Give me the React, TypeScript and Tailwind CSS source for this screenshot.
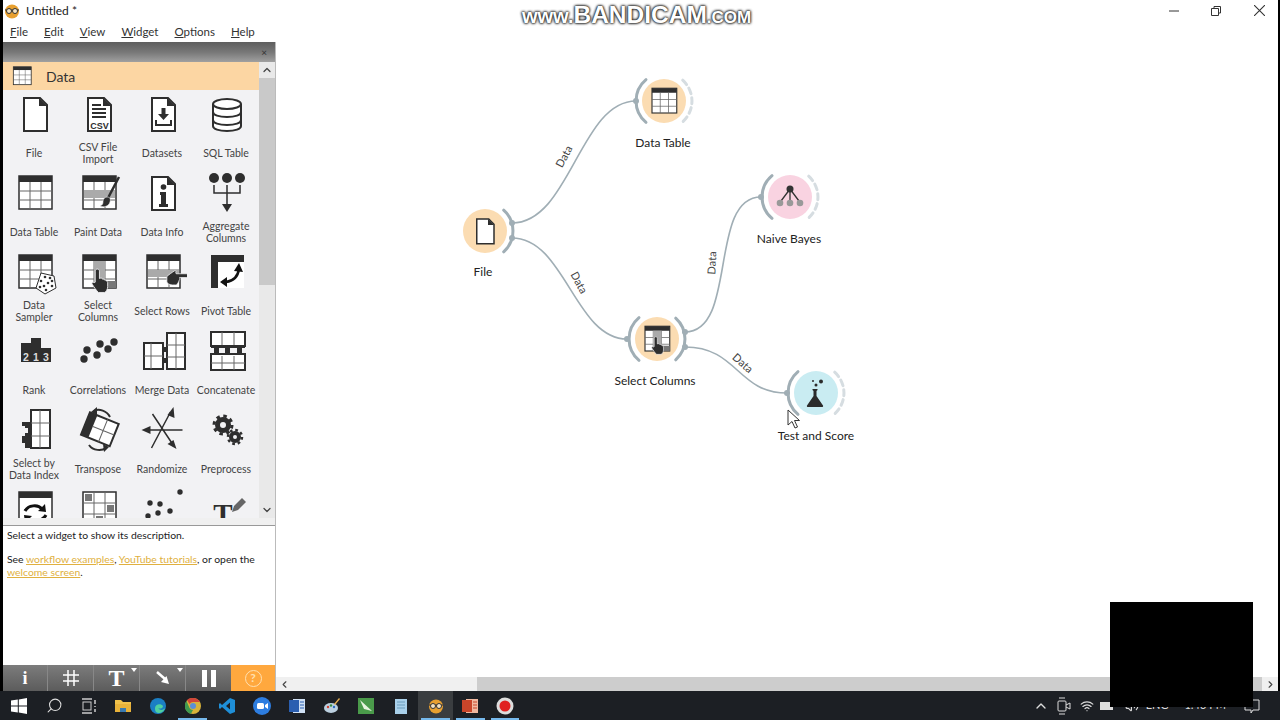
import type { ReactNode } from "react";
import { ChevronDown, ChevronLeft, ChevronRight, ChevronUp, Search, Wifi, Volume2 } from "lucide-react";

const INK = "#2e2e2e";

function Box({ children, className = "w-[48px] h-[48px]" }: { children: ReactNode; className?: string }) {
  return (
    <svg viewBox="0 0 48 48" className={className}>
      {children}
    </svg>
  );
}

// plain grid with dark header, used by most table widgets
function Table({ x = 8, y = 7, w = 33, h = 33, head = 6, cols = 3, rows = 3 }) {
  const lines = [];
  for (let i = 1; i < cols; i++) lines.push(<path key={"c" + i} d={`M${x + (w * i) / cols} ${y + head}V${y + h}`} stroke="#666" strokeWidth="1" />);
  for (let i = 1; i < rows; i++) lines.push(<path key={"r" + i} d={`M${x} ${y + head + ((h - head) * i) / rows}H${x + w}`} stroke="#666" strokeWidth="1" />);
  return (
    <g>
      <rect x={x} y={y} width={w} height={h} fill="#fff" stroke={INK} strokeWidth="1.5" />
      <rect x={x} y={y} width={w} height={head} fill={INK} />
      {lines}
    </g>
  );
}

function HandPath({ transform }: { transform: string }) {
  return (
    <path
      transform={transform}
      fill={INK}
      stroke="#f2f2f4"
      strokeWidth="0.8"
      d="M7 1c1.2 0 2 .9 2 2v7l1-.3c.9-.3 1.5.2 1.8.9.8-.3 1.6 0 1.9.8.8-.2 1.6.2 1.8 1 .6 0 1.3.4 1.3 1.4v4c0 2.5-1.5 5-3 5.5H8c-1.3-1-4.8-6-6-8-.7-1.2.7-2.4 1.9-1.3L5 13.5V3c0-1.1.9-2 2-2z"
    />
  );
}

function Doc({ children }: { children?: ReactNode }) {
  return (
    <g>
      <path d="M13 8H29L36 15V41H13Z" fill="#fff" stroke={INK} strokeWidth="2" />
      <path d="M28 8L36 16H28Z" fill={INK} />
      {children}
    </g>
  );
}

const FileIcon = ({ className }: { className?: string }) => <Box className={className}><Doc /></Box>;

const CsvIcon = () => (
  <Box>
    <Doc>
      <path d="M17 14h9v2h-9zM17 18h14v2H17zM17 22h14v2H17zM17 26h14v2H17z" fill={INK} />
      <text x="24.5" y="38.5" textAnchor="middle" fontFamily="Liberation Sans, sans-serif" fontWeight="700" fontSize="9" fill={INK}>CSV</text>
    </Doc>
  </Box>
);

const DatasetsIcon = () => (
  <Box>
    <Doc>
      <path d="M22.5 18h4v6h3.5l-5.500 6-5.500-6h3.500z" fill={INK} />
      <path d="M17 30v5h15v-5" fill="none" stroke={INK} strokeWidth="2" />
    </Doc>
  </Box>
);

const SqlIcon = () => (
  <Box>
    <g fill="#fff" stroke={INK} strokeWidth="2">
      <path d="M10 14V36C10 39 16 41 24 41S38 39 38 36V14" />
      <ellipse cx="24" cy="14" rx="14" ry="5" />
      <path d="M10 22C10 25 16 27 24 27S38 25 38 22M10 30C10 33 16 35 24 35S38 33 38 30" fill="none" />
    </g>
  </Box>
);

const DataTableIcon = ({ className }: { className?: string }) => <Box className={className}><Table /></Box>;

const PaintIcon = () => (
  <Box>
    <Table />
    <rect x="9" y="21" width="31" height="8" fill="#aaa" />
    <path d="M44 8L33 29" stroke={INK} strokeWidth="2.500" />
    <path d="M32 28c3 0 4 2 3 5-1 4-6 6-10 4 3-1 3-3 3-5 0-2 2-4 4-4z" fill={INK} stroke="#f2f2f4" strokeWidth="0.6" />
  </Box>
);

const InfoIcon = () => (
  <Box>
    <Doc>
      <circle cx="24.500" cy="18" r="2.800" fill={INK} />
      <path d="M21 23h6v12h2v3h-9v-3h2v-9h-1z" fill={INK} />
    </Doc>
  </Box>
);

const AggregateIcon = () => (
  <Box>
    <circle cx="11" cy="9" r="5" fill={INK} />
    <circle cx="24" cy="9" r="5" fill={INK} />
    <circle cx="37" cy="9" r="5" fill={INK} />
    <path d="M11 16V24H37V16M24 16V38" fill="none" stroke={INK} strokeWidth="1.500" />
    <path d="M19 35h10l-5 8z" fill={INK} />
  </Box>
);

const SamplerIcon = () => (
  <Box>
    <Table />
    <path d="M30 25l13 3 2 12-11 6-9-6z" fill="#fff" stroke={INK} strokeWidth="1" />
    <g fill={INK}>
      <circle cx="30" cy="33" r="1.300" /><circle cx="34" cy="29" r="1.300" /><circle cx="39" cy="30" r="1.300" />
      <circle cx="33" cy="38" r="1.300" /><circle cx="37" cy="35" r="1.300" /><circle cx="41" cy="38" r="1.300" />
      <circle cx="35" cy="42" r="1.300" /><circle cx="29" cy="39" r="1.300" /><circle cx="41" cy="33" r="1.300" />
    </g>
  </Box>
);

const ColumnsIcon = ({ className }: { className?: string }) => (
  <Box className={className}>
    <Table />
    <rect x="19" y="13" width="11" height="27" fill="#aaa" />
    <rect x="30" y="33" width="11" height="7" fill="#777" />
    <HandPath transform="translate(15 20) scale(1.050)" />
  </Box>
);

const RowsIcon = () => (
  <Box>
    <Table />
    <rect x="9" y="22" width="31" height="7" fill="#aaa" />
    <HandPath transform="translate(50 21) rotate(90) scale(0.950)" />
  </Box>
);

const PivotIcon = () => (
  <Box>
    <rect x="8" y="7" width="33" height="33" fill={INK} />
    <rect x="15" y="14" width="26" height="26" fill="#fff" />
    <path d="M23 34C31 33 35 28 36 21" fill="none" stroke="#111" strokeWidth="2.500" />
    <path d="M31 23l5-8 4 9zM24 29v10l-7-5z" fill="#111" />
  </Box>
);

const RankIcon = () => (
  <Box>
    <rect x="10" y="16" width="10" height="19" fill={INK} />
    <rect x="20" y="11" width="10" height="24" fill={INK} />
    <rect x="30" y="21" width="10" height="14" fill={INK} />
    <g fill="#ddd" fontFamily="Liberation Sans, sans-serif" fontWeight="700" fontSize="10.500" textAnchor="middle">
      <text x="15" y="33.500">2</text>
      <text x="25" y="33.500">1</text>
      <text x="35" y="33.500">3</text>
    </g>
  </Box>
);

const CorrelationsIcon = () => (
  <Box>
    <g fill={INK}>
      <circle cx="9" cy="32" r="3.700" /><circle cx="12" cy="23" r="3.700" /><circle cx="22" cy="28" r="3.700" />
      <circle cx="25" cy="17" r="3.700" /><circle cx="33" cy="22" r="3.700" /><circle cx="39" cy="15" r="3.700" />
    </g>
  </Box>
);

const MergeIcon = () => (
  <Box>
    <rect x="5" y="16" width="19" height="26" fill="#fff" stroke={INK} strokeWidth="2" />
    <path d="M12 16v26M5 29h19" stroke="#666" />
    <rect x="28" y="6" width="18" height="36" fill="#fff" stroke={INK} strokeWidth="2" />
    <path d="M37 6v36M28 18h18M28 30h18" stroke="#666" />
    <path d="M24 20h4v5h-4zM24 31h4v5h-4z" fill={INK} />
  </Box>
);

const ConcatIcon = () => (
  <Box>
    <rect x="8" y="5" width="34" height="14" fill="#fff" stroke={INK} strokeWidth="2" />
    <rect x="8" y="27" width="34" height="16" fill="#fff" stroke={INK} strokeWidth="2" />
    <path d="M19 5v14M31 5v14M19 29v14M31 29v14M8 36h34" stroke="#666" />
    <path d="M8 18h34v3H8zM11 21h5v6h-5zM22 21h5v6h-5zM34 21h5v6h-5zM8 26h34v2H8z" fill={INK} />
  </Box>
);

const IndexIcon = () => (
  <Box>
    <rect x="20" y="4" width="19" height="38" fill="#fff" stroke={INK} strokeWidth="2" />
    <path d="M29 4v38M20 17h19M20 30h19" stroke="#666" />
    <path d="M14 16h6v26h-6v-5h-3v-7h3v-3h3v-5h-3v-2h-3v-4h3z" fill={INK} />
  </Box>
);

const TransposeIcon = () => (
  <Box>
    <g transform="rotate(22 24 24)">
      <rect x="9" y="11" width="31" height="24" fill="#fff" stroke={INK} strokeWidth="2" />
      <rect x="9" y="11" width="8" height="24" fill={INK} />
      <path d="M28 11v24M17 23h23" stroke="#666" />
    </g>
    <path d="M19 5C24 2 32 5 35 11M14 39C18 45 27 45 31 42" fill="none" stroke={INK} strokeWidth="2" />
    <path d="M22 1v8l-6-3zM28 38l1 8 5-5z" fill={INK} />
  </Box>
);

const RandomizeIcon = () => (
  <Box>
    <g transform="translate(1.500 0)">
      <g stroke={INK} strokeWidth="1.500" fill="none">
        <path d="M11 42L30 6M12 8L32 38M5 24H42" />
      </g>
      <path d="M33 1l1 11-7-3zM36 43l-9-5 6-4zM1 24l9-4v8z" fill={INK} />
    </g>
  </Box>
);

const PreprocessIcon = () => (
  <Box>
    <g fill="none" stroke={INK}>
      <circle cx="20" cy="19" r="5.500" strokeWidth="5" />
      <circle cx="20" cy="19" r="9" strokeWidth="3" strokeDasharray="3.500 3.570" />
      <circle cx="32" cy="31" r="4" strokeWidth="4" />
      <circle cx="32" cy="31" r="7" strokeWidth="2.500" strokeDasharray="2.700 2.800" />
    </g>
  </Box>
);

const RefreshIcon = () => (
  <Box>
    <rect x="8" y="7" width="33" height="40" fill="#fff" stroke={INK} strokeWidth="1.500" />
    <rect x="8" y="7" width="33" height="6" fill={INK} />
    <path d="M14 26C17 20 27 19 31 24M35 30C31 37 21 37 17 33" fill="none" stroke="#111" strokeWidth="3" />
    <path d="M27 26l8 1-1-8zM21 31l-8-1 1 8z" fill="#111" />
  </Box>
);

const GridIcon = () => (
  <Box>
    <rect x="8" y="7" width="33" height="40" fill="#fff" stroke={INK} strokeWidth="1.500" />
    <path d="M19 7v40M30 7v40M8 18h33M8 29h33M8 40h33" stroke="#666" />
    <rect x="10" y="9" width="7" height="7" fill="#777" />
    <rect x="32" y="20" width="7" height="7" fill="#777" />
    <rect x="21" y="31" width="7" height="7" fill="#777" />
  </Box>
);

const ScatterIcon = () => (
  <Box>
    <g fill={INK}>
      <circle cx="41" cy="7" r="2.700" /><circle cx="11" cy="18" r="2.700" /><circle cx="21" cy="19" r="2.700" />
      <circle cx="31" cy="26" r="2.700" /><circle cx="19" cy="28" r="2.700" /><circle cx="9" cy="31" r="2.700" />
    </g>
  </Box>
);

const TextIcon = () => (
  <Box>
    <text x="20" y="39" textAnchor="middle" fontFamily="Liberation Serif, serif" fontWeight="700" fontSize="29" fill={INK}>T</text>
    <path d="M29 27l2-6 8-8 4 4-8 8z" fill="#666" />
  </Box>
);

const BayesIcon = () => (
  <svg viewBox="0 0 30 30" className="w-[30px] h-[30px]">
    <path d="M15 7L6 19M15 7V18M15 7L24 19" stroke="#333" strokeWidth="1.300" fill="none" />
    <circle cx="15" cy="7" r="3.500" fill="#333" />
    <circle cx="5" cy="21" r="3.300" fill="#999" />
    <circle cx="15" cy="21" r="3.300" fill="#999" />
    <circle cx="25" cy="21" r="3.300" fill="#999" />
  </svg>
);

const FlaskIcon = () => (
  <svg viewBox="0 0 30 30" className="w-[30px] h-[30px]">
    <path d="M11.500 11h5v1l-1 1v5l6.500 9.500c.4.800 0 1.500-1 1.500H7c-1 0-1.400-.7-1-1.500L12.500 18v-5l-1-1z" fill="#2b2b2b" />
    <circle cx="15" cy="7" r="1.500" fill="#2b2b2b" />
    <circle cx="20" cy="3.500" r="2" fill="#2b2b2b" />
    <circle cx="12" cy="3" r="1" fill="#2b2b2b" />
  </svg>
);

// last row is cut off by the panel so it has no visible labels
const widgets: { id: string; label: string[]; icon: ReactNode }[] = [
  { id: "file", label: ["File"], icon: <FileIcon /> },
  { id: "csv", label: ["CSV File", "Import"], icon: <CsvIcon /> },
  { id: "datasets", label: ["Datasets"], icon: <DatasetsIcon /> },
  { id: "sql", label: ["SQL Table"], icon: <SqlIcon /> },
  { id: "table", label: ["Data Table"], icon: <DataTableIcon /> },
  { id: "paint", label: ["Paint Data"], icon: <PaintIcon /> },
  { id: "info", label: ["Data Info"], icon: <InfoIcon /> },
  { id: "aggregate", label: ["Aggregate", "Columns"], icon: <AggregateIcon /> },
  { id: "sampler", label: ["Data", "Sampler"], icon: <SamplerIcon /> },
  { id: "columns", label: ["Select", "Columns"], icon: <ColumnsIcon /> },
  { id: "rows", label: ["Select Rows"], icon: <RowsIcon /> },
  { id: "pivot", label: ["Pivot Table"], icon: <PivotIcon /> },
  { id: "rank", label: ["Rank"], icon: <RankIcon /> },
  { id: "corr", label: ["Correlations"], icon: <CorrelationsIcon /> },
  { id: "merge", label: ["Merge Data"], icon: <MergeIcon /> },
  { id: "concat", label: ["Concatenate"], icon: <ConcatIcon /> },
  { id: "index", label: ["Select by", "Data Index"], icon: <IndexIcon /> },
  { id: "transpose", label: ["Transpose"], icon: <TransposeIcon /> },
  { id: "randomize", label: ["Randomize"], icon: <RandomizeIcon /> },
  { id: "preprocess", label: ["Preprocess"], icon: <PreprocessIcon /> },
  { id: "r6a", label: [], icon: <RefreshIcon /> },
  { id: "r6b", label: [], icon: <GridIcon /> },
  { id: "r6c", label: [], icon: <ScatterIcon /> },
  { id: "r6d", label: [], icon: <TextIcon /> },
];

function arc(cx: number, cy: number, r: number, from: number, to: number) {
  const p = (a: number) => {
    const t = (a * Math.PI) / 180;
    return `${(cx + r * Math.cos(t)).toFixed(1)} ${(cy + r * Math.sin(t)).toFixed(1)}`;
  };
  return `M${p(from)}A${r} ${r} 0 0 1 ${p(to)}`;
}

const WIRE = "#a0aeb5";
const OFF = "#d6dde1";

function Ports({ x, y, input, output, dashed }: { x: number; y: number; input?: boolean; output?: boolean; dashed?: boolean }) {
  return (
    <g fill="none" strokeLinecap="round">
      {input && <path d={arc(x, y, 28, 130, 230)} stroke={WIRE} strokeWidth="3" />}
      {output && <path d={arc(x, y, 28, -48, 48)} stroke={WIRE} strokeWidth="3" />}
      {dashed && <path d={arc(x, y, 28, -48, 48)} stroke={OFF} strokeWidth="3" strokeDasharray="6 4" />}
    </g>
  );
}

function WireLabel({ x, y, angle }: { x: number; y: number; angle: number }) {
  return (
    <text x={x} y={y} transform={`rotate(${angle} ${x} ${y})`} textAnchor="middle" dominantBaseline="middle" fontFamily="Lato, sans-serif" fontSize="11" fill="#444">
      Data
    </text>
  );
}

function Canvas() {
  return (
    <div className="relative flex-1 bg-white">
      <svg viewBox="276 42 1002 635" className="absolute inset-0 w-full h-full">
        <g fill="none" stroke={WIRE} strokeWidth="1.600">
          <path d="M512 223C570 223 580 101 636 101" />
          <path d="M512 238C565 238 575 339 627 339" />
          <path d="M685 332C738 332 708 197 761 197" />
          <path d="M685 347C738 347 737 393 787 393" />
        </g>
        <g fill={WIRE}>
          <circle cx="512" cy="223" r="3" /><circle cx="512" cy="238" r="3" /><circle cx="636" cy="101" r="3" />
          <circle cx="627" cy="339" r="3" /><circle cx="685" cy="332" r="3" /><circle cx="685" cy="347" r="3" />
          <circle cx="761" cy="197" r="3" /><circle cx="787" cy="393" r="3" />
        </g>
        <Ports x={485} y={231} output />
        <Ports x={664} y={101} input dashed />
        <Ports x={657} y={339} input output />
        <Ports x={790} y={197} input dashed />
        <Ports x={816} y={393} input dashed />
        <WireLabel x={565} y={157} angle={-62} />
        <WireLabel x={578} y={283} angle={62} />
        <WireLabel x={713} y={263} angle={-87} />
        <WireLabel x={742} y={364} angle={42} />
      </svg>

      <div className="absolute left-[187px] top-[167px] w-[44px] h-[44px] rounded-full bg-[#fbdcb2] flex items-center justify-center">
        <FileIcon className="w-[36px] h-[36px]" />
      </div>
      <div className="absolute left-[366px] top-[37px] w-[44px] h-[44px] rounded-full bg-[#fbdcb2] flex items-center justify-center">
        <DataTableIcon className="w-[36px] h-[36px]" />
      </div>
      <div className="absolute left-[359px] top-[275px] w-[44px] h-[44px] rounded-full bg-[#fbdcb2] flex items-center justify-center">
        <ColumnsIcon className="w-[36px] h-[36px]" />
      </div>
      <div className="absolute left-[492px] top-[133px] w-[44px] h-[44px] rounded-full bg-[#f9d3e1] flex items-center justify-center">
        <BayesIcon />
      </div>
      <div className="absolute left-[518px] top-[329px] w-[44px] h-[44px] rounded-full bg-[#c9ecf2] flex items-center justify-center">
        <FlaskIcon />
      </div>

      <div className="absolute left-[107px] top-[221px] w-[200px] text-center text-[12px] leading-[18px] text-[#222]">File</div>
      <div className="absolute left-[287px] top-[92px] w-[200px] text-center text-[12px] leading-[18px] text-[#222]">Data Table</div>
      <div className="absolute left-[413px] top-[188px] w-[200px] text-center text-[12px] leading-[18px] text-[#222]">Naive Bayes</div>
      <div className="absolute left-[279px] top-[330px] w-[200px] text-center text-[12px] leading-[18px] text-[#222]">Select Columns</div>
      <div className="absolute left-[440px] top-[385px] w-[200px] text-center text-[12px] leading-[18px] text-[#222]">Test and Score</div>

      {/* mouse pointer */}
      <svg viewBox="0 0 14 20" className="absolute left-[511px] top-[367px] w-[14px] h-[20px]">
        <path d="M1 1V16L5 12.500L8 19L10.500 18L7.500 11.500H12.500Z" fill="#fff" stroke="#333" strokeWidth="1" />
      </svg>
    </div>
  );
}

function Sidebar() {
  return (
    <div className="w-[273px] flex flex-col bg-[#f2f2f4] border-r border-[#bbb]">
      <div className="h-[20px] flex items-center justify-end pr-[8px] bg-gradient-to-b from-[#5e5e5e] via-[#777] to-[#a0a0a0] text-[10px] leading-none text-[#333]">×</div>
      <div className="flex flex-1 min-h-0">
        <div className="w-[256px] flex flex-col min-h-0">
          <div className="h-[28px] shrink-0 flex items-center gap-[11px] pl-[6px] bg-[#fcd6a3]">
            <DataTableIcon className="w-[26px] h-[26px]" />
            <span className="text-[14px] text-[#333]">Data</span>
          </div>
          <div className="flex-1 min-h-0 overflow-hidden grid grid-cols-[repeat(4,64px)] auto-rows-[79px]">
            {widgets.map((w) => (
              <div key={w.id} className="flex flex-col items-center">
                {w.icon}
                {w.label.length > 0 && (
                  <div className="h-[28px] mt-px mr-[2px] flex flex-col justify-center items-center text-[10.500px] leading-[12px] text-[#444] whitespace-nowrap">
                    {w.label.map((l) => (
                      <span key={l}>{l}</span>
                    ))}
                  </div>
                )}
              </div>
            ))}
          </div>
        </div>
        <div className="w-[16px] flex flex-col items-center bg-[#e9e9e9] text-[#444]">
          <div className="h-[16px] flex items-center"><ChevronUp size={12} strokeWidth={2.5} /></div>
          <div className="h-[207px] w-full bg-[#c9c9c9]" />
          <div className="flex-1" />
          <div className="h-[16px] flex items-center"><ChevronDown size={12} strokeWidth={2.5} /></div>
        </div>
      </div>
      <div className="h-[7px] shrink-0 bg-[#f0f0f0]" />
      <div className="h-[140px] shrink-0 bg-white border-t border-[#999] px-[4px] pt-[3px] text-[10.400px] leading-[13px] text-[#222]">
        <p>Select a widget to show its description.</p>
        <p className="mt-[11px]">
          See <span className="text-[#e0b040] underline">workflow examples</span>, <span className="text-[#e0b040] underline">YouTube tutorials</span>, or open the{" "}
          <span className="text-[#e0b040] underline">welcome screen</span>.
        </p>
      </div>
      <div className="h-[26px] shrink-0 flex text-white">
        <div className="w-[45px] flex items-center justify-center bg-gradient-to-b from-[#7c7c7c] to-[#5c5c5c] border-r border-[#888] font-['Liberation_Serif',serif] font-bold text-[18px]">i</div>
        <div className="w-[46px] flex items-center justify-center bg-gradient-to-b from-[#7c7c7c] to-[#5c5c5c] border-r border-[#888]">
          <svg viewBox="0 0 18 18" className="w-[18px] h-[18px]">
            <path d="M6 1V17M12 1V17M1 6H17M1 12H17" stroke="#fff" strokeWidth="1.500" />
          </svg>
        </div>
        <div className="relative w-[46px] flex items-center justify-center bg-gradient-to-b from-[#7c7c7c] to-[#5c5c5c] border-r border-[#888] font-['Liberation_Serif',serif] font-bold text-[24px]">
          T
          <span className="absolute right-[2px] top-[3px] w-0 h-0 border-x-[3px] border-x-transparent border-t-[4px] border-t-white" />
        </div>
        <div className="relative w-[46px] flex items-center justify-center bg-gradient-to-b from-[#7c7c7c] to-[#5c5c5c] border-r border-[#888]">
          <svg viewBox="0 0 16 16" className="w-[16px] h-[16px]">
            <path d="M2 2L10 9" stroke="#fff" strokeWidth="2.500" />
            <path d="M14 14L6 12L11.500 6Z" fill="#fff" />
          </svg>
          <span className="absolute right-[2px] top-[3px] w-0 h-0 border-x-[3px] border-x-transparent border-t-[4px] border-t-white" />
        </div>
        <div className="w-[45px] flex items-center justify-center gap-[4px] bg-gradient-to-b from-[#7c7c7c] to-[#5c5c5c]">
          <span className="w-[5px] h-[17px] bg-white" />
          <span className="w-[5px] h-[17px] bg-white" />
        </div>
        <div className="flex-1 flex items-center justify-center bg-[#ffa83e]">
          <span className="w-[17px] h-[17px] rounded-full border-[1.500px] border-[#ffe0b0] flex items-center justify-center text-[12px] font-bold text-[#ffe0b0]">?</span>
        </div>
      </div>
    </div>
  );
}

function OrangeLogo({ className }: { className: string }) {
  return (
    <svg viewBox="0 0 16 16" className={className}>
      <circle cx="8" cy="8.500" r="7" fill="#e8a030" />
      <path d="M1 7H15" stroke="#333" strokeWidth="1" />
      <circle cx="5" cy="8" r="2.500" fill="#f4e4c4" stroke="#333" strokeWidth="1" />
      <circle cx="11" cy="8" r="2.500" fill="#f4e4c4" stroke="#333" strokeWidth="1" />
    </svg>
  );
}

function TaskIcon({ children, active, open }: { children: ReactNode; active?: boolean; open?: boolean }) {
  return (
    <div className={active ? "relative w-[34.700px] h-full flex items-center justify-center bg-[#3a3d40]" : "relative w-[34.700px] h-full flex items-center justify-center"}>
      {children}
      {open && <span className="absolute left-[3px] right-[3px] bottom-0 h-[2px] bg-[#76b9ed]" />}
    </div>
  );
}

function Taskbar() {
  return (
    <div className="h-[29px] shrink-0 flex items-center pl-[2px] bg-[#1c1f24] text-white">
      <TaskIcon>
        <svg viewBox="0 0 16 16" className="w-[16px] h-[16px]"><path d="M0 2.500L6.800 1.500V7.500H0ZM7.800 1.400L16 0V7.500H7.800ZM0 8.500H6.800V14.500L0 13.500ZM7.800 8.500H16V16L7.800 14.600Z" fill="#fff" /></svg>
      </TaskIcon>
      <TaskIcon><Search size={17} strokeWidth={1.5} className="-scale-x-100 text-[#ddd]" /></TaskIcon>
      <TaskIcon>
        <svg viewBox="0 0 16 16" className="w-[16px] h-[16px]" fill="none" stroke="#ccc"><path d="M1 1H11M1 15H11" strokeWidth="1.500" /><rect x="2" y="4" width="8" height="8" /><path d="M14 2V6M14 8V9M14 11V14" strokeWidth="1.500" /></svg>
      </TaskIcon>
      <TaskIcon>
        <svg viewBox="0 0 18 16" className="w-[18px] h-[16px]"><path d="M1 2H7L9 4H17V14H1Z" fill="#f0c14b" /><rect x="1" y="6" width="16" height="8" fill="#e8b23a" /><rect x="6" y="10" width="6" height="4" fill="#3a7ab0" /></svg>
      </TaskIcon>
      <TaskIcon>
        <svg viewBox="0 0 16 16" className="w-[16px] h-[16px]"><circle cx="8" cy="8" r="8" fill="#1b7fc4" /><path d="M5 10C5 6 11 5 13 8C13 11 9 11 8 10C10 13 14 12 15 10C14 15 8 16 6 14C5 13 5 11 5 10Z" fill="#4fd1a0" /></svg>
      </TaskIcon>
      <TaskIcon open>
        <svg viewBox="0 0 16 16" className="w-[16px] h-[16px]"><circle cx="8" cy="8" r="8" fill="#d8b23a" /><path d="M8 0A8 8 0 0 1 15 4H8A4 4 0 0 0 4.500 6L2 2A8 8 0 0 1 8 0Z" fill="#d0453a" /><path d="M1.500 3A8 8 0 0 0 6 15.800L8 12A4 4 0 0 1 4.500 10Z" fill="#3f9a50" /><circle cx="8" cy="8" r="3" fill="#5a8fd8" /></svg>
      </TaskIcon>
      <TaskIcon>
        <svg viewBox="0 0 16 16" className="w-[16px] h-[16px]"><path d="M11 0L16 2V14L11 16L3 9L1 11L0 10V6L1 5L3 7ZM11 4.500L7 8L11 11.500Z" fill="#1f8fd8" /></svg>
      </TaskIcon>
      <TaskIcon>
        <svg viewBox="0 0 18 18" className="w-[18px] h-[18px]"><circle cx="9" cy="9" r="9" fill="#2d7de0" /><rect x="4" y="6" width="7" height="6" rx="1.500" fill="#fff" /><path d="M12 8L15 6V12L12 10Z" fill="#fff" /></svg>
      </TaskIcon>
      <TaskIcon>
        <svg viewBox="0 0 16 16" className="w-[16px] h-[16px]"><rect x="4" y="1" width="12" height="14" fill="#cfe0f5" /><rect x="0" y="2" width="10" height="12" fill="#2b5fb0" /><path d="M11 4h4M11 7h4M11 10h4" stroke="#2b5fb0" /></svg>
      </TaskIcon>
      <TaskIcon>
        <svg viewBox="0 0 16 16" className="w-[16px] h-[16px]"><ellipse cx="7" cy="10" rx="7" ry="5" fill="#bcd0e0" /><circle cx="4" cy="9" r="1.200" fill="#d04030" /><circle cx="7" cy="7.500" r="1.200" fill="#3a8a40" /><circle cx="10" cy="9" r="1.200" fill="#2a6ac0" /><path d="M10 6L15 0L16 1L11 7Z" fill="#e8b050" /></svg>
      </TaskIcon>
      <TaskIcon>
        <svg viewBox="0 0 16 16" className="w-[16px] h-[16px]"><rect width="16" height="16" fill="#4a9a4a" /><path d="M2 2L14 13L6 11Z" fill="#e8f4e0" /></svg>
      </TaskIcon>
      <TaskIcon>
        <svg viewBox="0 0 16 16" className="w-[16px] h-[16px]"><rect x="2" y="1" width="12" height="15" fill="#a9d0ea" /><path d="M4 4h8M4 7h8M4 10h8" stroke="#6a9cbc" /></svg>
      </TaskIcon>
      <TaskIcon active open><OrangeLogo className="w-[16px] h-[16px]" /></TaskIcon>
      <TaskIcon open>
        <svg viewBox="0 0 16 16" className="w-[16px] h-[16px]"><rect x="4" y="1" width="12" height="14" fill="#f0b8a0" /><rect x="0" y="2" width="10" height="12" fill="#c8452a" /><path d="M11 4h4M11 7h4M11 10h4" stroke="#c8452a" /></svg>
      </TaskIcon>
      <TaskIcon open>
        <svg viewBox="0 0 18 18" className="w-[18px] h-[18px]"><circle cx="9" cy="9" r="8.500" fill="#ddd" /><circle cx="9" cy="9" r="5.500" fill="#e02020" /></svg>
      </TaskIcon>
      <div className="flex-1" />
      <div className="flex items-center h-full pr-[20px]">
        <ChevronUp size={16} className="text-[#ddd] mr-[8px]" />
        <svg viewBox="0 0 14 18" className="w-[14px] h-[18px] mr-[9px]" fill="none" stroke="#ddd"><rect x="1" y="4" width="8" height="10" rx="1" /><path d="M9 8l4-2v6l-4-2M2 1h6M2 17h6" /></svg>
        <Wifi size={14} className="text-[#ddd] mr-[5px]" />
        <svg viewBox="0 0 16 12" className="w-[16px] h-[12px] mr-[10px]"><rect x="1" y="2" width="13" height="8" fill="#ddd" /></svg>
        <Volume2 size={14} className="text-[#ddd] mr-[7px]" />
        <span className="text-[11px] text-[#ddd] mr-[16px]">ENG</span>
        <span className="text-[11px] text-[#ddd] mr-[18px]">1:43 PM</span>
        <svg viewBox="0 0 16 16" className="w-[16px] h-[16px]" fill="none" stroke="#ddd"><path d="M1 2H15V12H9L7 15V12H1Z" /></svg>
      </div>
    </div>
  );
}

export default function App() {
  return (
    <div className="relative w-[1280px] h-[720px] overflow-hidden flex flex-col bg-black font-['Lato','Liberation_Sans',sans-serif]">
      <div className="flex-1 min-h-0 flex flex-col ml-[3px] mr-[2px] bg-white">
        <div className="h-[21px] shrink-0 flex items-center">
          <OrangeLogo className="w-[16px] h-[16px] ml-[1px]" />
          <span className="ml-[6px] text-[12px] text-[#222]">Untitled *</span>
          <div className="ml-auto flex items-center text-[#333]">
            <svg viewBox="0 0 10 10" className="w-[10px] h-[10px] mr-[32px]"><path d="M0 5H10" stroke="#333" /></svg>
            <svg viewBox="0 0 10 10" className="w-[10px] h-[10px] mr-[33px]" fill="none" stroke="#333"><path d="M3 2V0.500H9.500V7H8M0.500 2.500H7.500V9.500H0.500Z" /></svg>
            <svg viewBox="0 0 10 10" className="w-[11px] h-[11px] mr-[13px]"><path d="M0 0L10 10M10 0L0 10" stroke="#333" /></svg>
          </div>
        </div>
        <div className="h-[21px] shrink-0 flex items-center pl-[7px] gap-[16px] text-[11.500px] text-[#333]">
          <span><u>F</u>ile</span>
          <span><u>E</u>dit</span>
          <span><u>V</u>iew</span>
          <span><u>W</u>idget</span>
          <span><u>O</u>ptions</span>
          <span><u>H</u>elp</span>
        </div>
        <div className="flex-1 min-h-0 flex">
          <Sidebar />
          <div className="flex-1 flex flex-col min-w-0">
            <Canvas />
            <div className="h-[14px] shrink-0 flex items-center bg-[#f0f0f0] text-[#444]">
              <div className="w-[16px] flex justify-center"><ChevronLeft size={11} strokeWidth={2.5} /></div>
              <div className="w-[185px]" />
              <div className="flex-1 h-full bg-[#cdcdcd]" />
              <div className="w-[16px] flex justify-center"><ChevronRight size={11} strokeWidth={2.5} /></div>
            </div>
          </div>
        </div>
      </div>
      <Taskbar />

      {/* recorder watermark */}
      <div className="absolute left-[522px] top-[3px] flex items-baseline font-['Liberation_Sans',sans-serif] font-bold text-white [text-shadow:0_0_3px_#222,0_0_3px_#222,0_0_2px_#222]">
        <span className="text-[20px] leading-[24px]">www.</span>
        <span className="text-[24.500px] leading-[24px]">BANDICAM</span>
        <span className="text-[17px] leading-[24px]">.COM</span>
      </div>
      {/* black block covering the clock */}
      <div className="absolute left-[1110px] top-[602px] w-[143px] h-[105px] bg-black" />
    </div>
  );
}
